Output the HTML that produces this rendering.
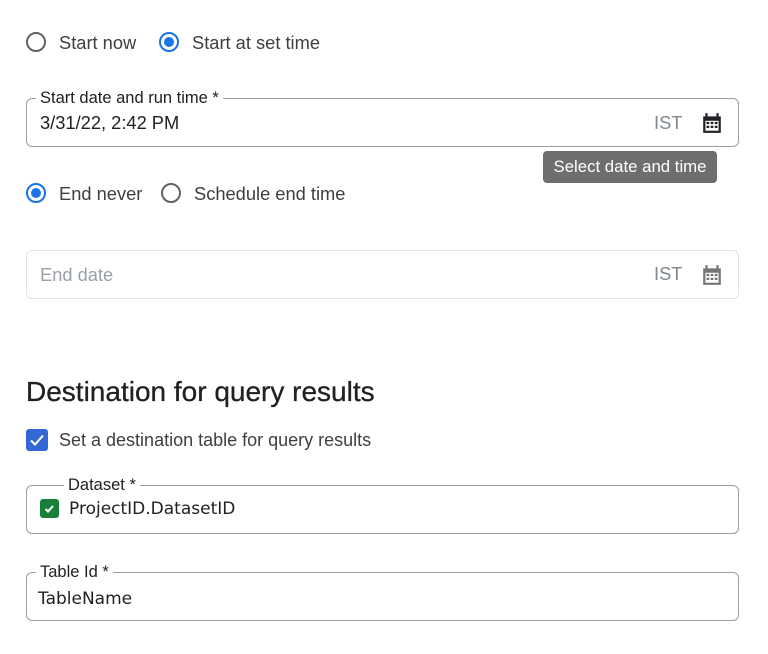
<!DOCTYPE html>
<html><head><style>
body{margin:0;width:768px;height:654px;background:#fff;font-family:"Liberation Sans",sans-serif;color:#202124;position:relative;overflow:hidden}
.a{position:absolute;white-space:nowrap}
.r{position:absolute;width:16px;height:16px;border:2px solid #5f6368;border-radius:50%}
.r.on{border-color:#1a73e8}
.r.on::after{content:"";position:absolute;left:3px;top:3px;width:10px;height:10px;border-radius:50%;background:#1a73e8}
.f{position:absolute;left:26px;width:711px;height:47px;border:1px solid #9aa0a6;border-radius:6px}
.lb{position:absolute;top:-10px;background:#fff;padding:0 4px;font-size:16.5px;color:#202124;line-height:18px}
.t{font-size:18.3px;line-height:20px}
</style></head><body>
<div class="r" style="left:26px;top:32px"></div><div class="a t" style="left:59px;top:33px;color:#3c4043">Start now</div>
<div class="r on" style="left:159px;top:32px"></div><div class="a t" style="left:192px;top:33px;color:#3c4043">Start at set time</div>

<div class="f" style="top:98px"><div class="lb" style="left:9px">Start date and run time *</div>
<div class="a t" style="left:13px;top:14px">3/31/22, 2:42 PM</div>
<div class="a t" style="left:627px;top:14px;color:#80868b">IST</div>
<svg class="a" style="left:674px;top:13px" width="22" height="22" viewBox="0 0 20 20"><path d="M4 1h2v3h8V1h2v3h2v15H2V4h2z" fill="#202124"/><rect x="4" y="8" width="12" height="9" fill="#fff"/><g fill="#202124"><rect x="5" y="9" width="2.5" height="2"/><rect x="8.75" y="9" width="2.5" height="2"/><rect x="12.5" y="9" width="2.5" height="2"/><rect x="5" y="12.5" width="2.5" height="2"/><rect x="8.75" y="12.5" width="2.5" height="2"/><rect x="12.5" y="12.5" width="2.5" height="2"/></g></svg>
</div>
<div class="a" style="left:543px;top:151px;width:174px;height:32px;background:#6e6e6e;border-radius:4px;color:#fff;font-size:16.8px;line-height:32px;text-align:center">Select date and time</div>

<div class="r on" style="left:26px;top:183px"></div><div class="a t" style="left:59px;top:184px;color:#3c4043">End never</div>
<div class="r" style="left:161px;top:183px"></div><div class="a t" style="left:194px;top:184px;color:#3c4043">Schedule end time</div>

<div class="f" style="top:250px;border-color:#e3e3e3">
<div class="a t" style="left:13px;top:14px;color:#9aa0a6">End date</div>
<div class="a t" style="left:627px;top:13px;color:#80868b">IST</div>
<svg class="a" style="left:674px;top:13px" width="22" height="22" viewBox="0 0 20 20"><path d="M4 1h2v3h8V1h2v3h2v15H2V4h2z" fill="#757575"/><rect x="4" y="8" width="12" height="9" fill="#fff"/><g fill="#757575"><rect x="5" y="9" width="2.5" height="2"/><rect x="8.75" y="9" width="2.5" height="2"/><rect x="12.5" y="9" width="2.5" height="2"/><rect x="5" y="12.5" width="2.5" height="2"/><rect x="8.75" y="12.5" width="2.5" height="2"/><rect x="12.5" y="12.5" width="2.5" height="2"/></g></svg>
</div>

<div class="a" style="left:26px;top:376px;font-size:28px;line-height:32px;-webkit-text-stroke:0.3px #202124">Destination for query results</div>
<div class="a" style="left:26px;top:429px;width:22px;height:22px;background:#3367d6;border-radius:3px"><svg width="22" height="22" viewBox="0 0 22 22"><path d="M5 11.5l4 4 8-9" stroke="#fff" stroke-width="2" fill="none"/></svg></div>
<div class="a t" style="left:59px;top:430px;color:#3c4043;font-size:18px">Set a destination table for query results</div>

<div class="f" style="top:485px"><div class="lb" style="left:37px">Dataset *</div>
<div class="a" style="left:13px;top:13px;width:19px;height:19px;background:#188038;border-radius:3px"><svg width="19" height="19" viewBox="0 0 19 19"><path d="M5.5 10l2.5 2.5 5-5.5" stroke="#fff" stroke-width="2" fill="none"/></svg></div>
<div class="a" style="left:42px;top:12px;font-size:17px;line-height:22px;font-family:'DejaVu Sans',sans-serif">ProjectID.DatasetID</div>
</div>

<div class="f" style="top:572px"><div class="lb" style="left:9px">Table Id *</div>
<div class="a" style="left:11px;top:15px;font-size:17px;line-height:22px;font-family:'DejaVu Sans',sans-serif">TableName</div>
</div>
</body></html>
